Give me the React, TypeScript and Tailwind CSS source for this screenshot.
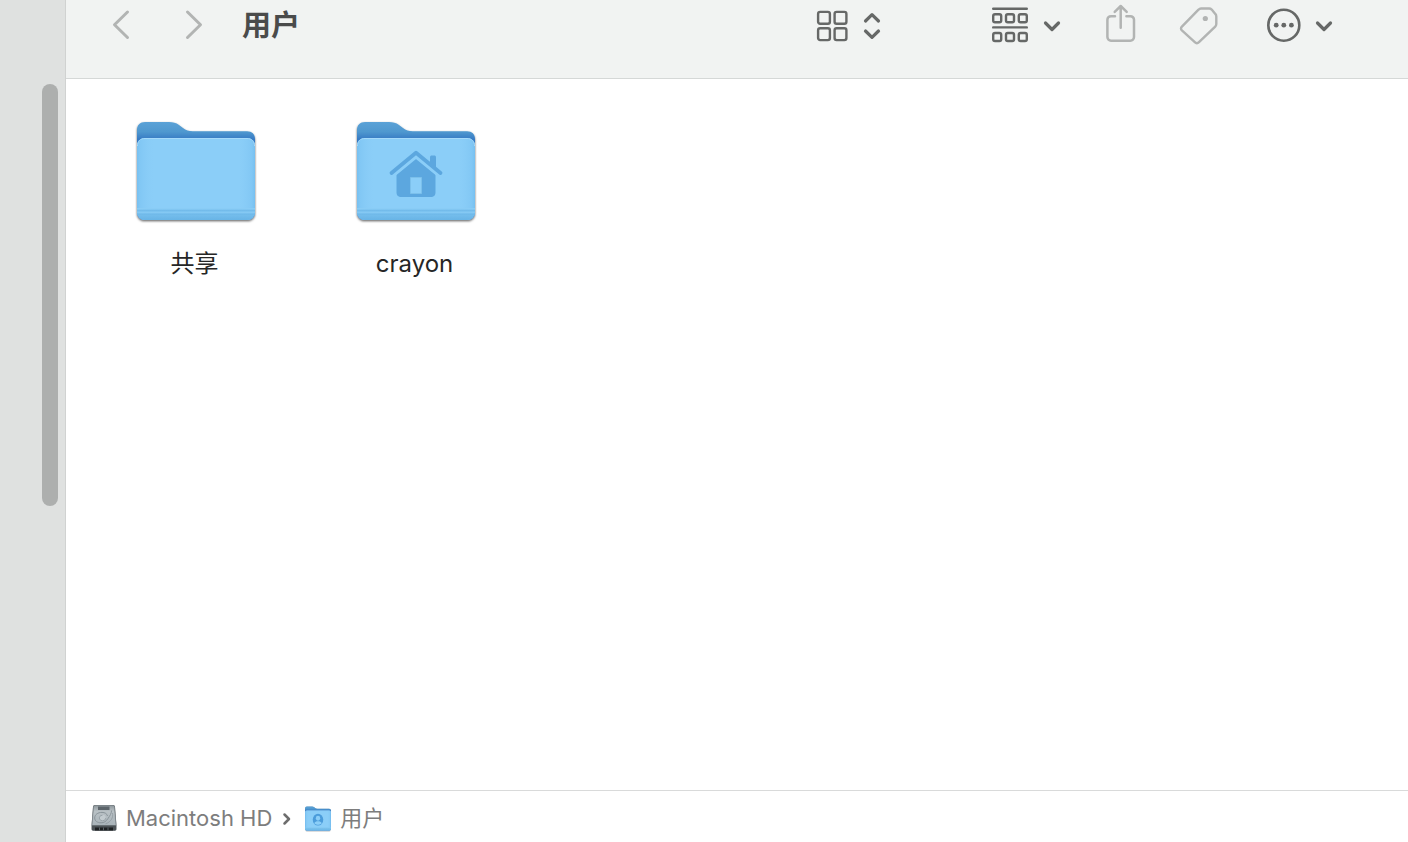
import { useId } from "react";
import type { ReactNode } from "react";

const ChevronDown = () => (
  <svg viewBox="0 0 18 50" className="h-[50px] w-[18px]" fill="none" aria-hidden="true">
    <path
      d="M2.500 23 9 29.500l6.500-6.500"
      stroke="currentColor"
      strokeWidth="3.2"
      strokeLinecap="round"
      strokeLinejoin="round"
    />
  </svg>
);

const GridIcon = () => (
  <svg viewBox="0 0 32 50" className="h-[50px] w-8" fill="none" aria-hidden="true">
    <g stroke="currentColor" strokeWidth="2.4">
      <rect x="2.1" y="11.9" width="11.8" height="11.8" rx="2" />
      <rect x="18.6" y="11.9" width="11.8" height="11.8" rx="2" />
      <rect x="2.1" y="28.3" width="11.8" height="11.8" rx="2" />
      <rect x="18.6" y="28.3" width="11.8" height="11.8" rx="2" />
    </g>
  </svg>
);

const UpDownIcon = () => (
  <svg viewBox="0 0 18 50" className="h-[50px] w-[18px]" fill="none" aria-hidden="true">
    <path
      d="M2.500 21 9 14.600l6.500 6.400M2.500 31 9 37.400l6.500-6.400"
      stroke="currentColor"
      strokeWidth="3.2"
      strokeLinecap="round"
      strokeLinejoin="round"
    />
  </svg>
);

const GroupIcon = () => (
  <svg viewBox="0 0 38 50" className="h-[50px] w-[38px]" fill="none" aria-hidden="true">
    <g stroke="currentColor" strokeWidth="2.4">
      <path d="M2.200 8.700h33.600M2.200 27.400h33.600" strokeLinecap="round" />
      {[2.2, 15, 27.8].map((x) => (
        <g key={x}>
          <rect x={x} y="14.3" width="8" height="8" rx="1.8" />
          <rect x={x} y="33" width="8" height="8" rx="1.8" />
        </g>
      ))}
    </g>
  </svg>
);

const ShareIcon = () => (
  <svg viewBox="0 0 32 50" className="h-[50px] w-8" fill="none" aria-hidden="true">
    <g stroke="currentColor" strokeWidth="2.5" strokeLinecap="round" strokeLinejoin="round">
      <path d="M10 16.200H6a3.600 3.600 0 0 0-3.600 3.600v17.300A3.600 3.600 0 0 0 6 40.700h19.400a3.600 3.600 0 0 0 3.600-3.600V19.800a3.600 3.600 0 0 0-3.600-3.600h-4" />
      <path d="M15.700 27.800V6.200M9.700 11.800l6-5.800 6 5.800" />
    </g>
  </svg>
);

const TagIcon = () => (
  <svg viewBox="0 0 40 50" className="h-[50px] w-10" fill="none" aria-hidden="true">
    <path
      d="M22 8.500h8.200c1 0 1.800.4 2.500 1.100l3.600 4.300c.7.700 1 1.600 1 2.500v7.600c0 1-.4 1.900-1.100 2.600L20 42.200c-1.400 1.400-2.800 1.400-4.200 0L2.900 30.400c-1.200-1.200-1.200-2.600 0-3.800L19.500 9.700c.7-.8 1.500-1.200 2.500-1.200Z"
      stroke="currentColor"
      strokeWidth="2.4"
      strokeLinejoin="round"
    />
    <circle cx="26.300" cy="18.500" r="2.600" fill="currentColor" />
  </svg>
);

const MoreIcon = () => (
  <svg viewBox="0 0 36 50" className="h-[50px] w-9" fill="none" aria-hidden="true">
    <circle cx="17.800" cy="25.200" r="15.500" stroke="currentColor" strokeWidth="2.600" />
    <g fill="currentColor">
      <circle cx="10.200" cy="25.200" r="2.400" />
      <circle cx="17.800" cy="25.200" r="2.400" />
      <circle cx="25.400" cy="25.200" r="2.400" />
    </g>
  </svg>
);

const FolderIcon = ({ className, children }: { className: string; children?: ReactNode }) => {
  const id = useId();

  return (
    <svg
      viewBox="0 0 128 110"
      preserveAspectRatio="none"
      className={className}
      fill="none"
      aria-hidden="true"
    >
      <defs>
        <linearGradient id={`${id}back`} x1="0" y1="0" x2="0" y2="1">
          <stop offset="0" stopColor="#5ba2d7" />
          <stop offset="0.1" stopColor="#4f98cf" />
          <stop offset="0.18" stopColor="#3579c3" />
          <stop offset="1" stopColor="#3579c3" />
        </linearGradient>
        <linearGradient id={`${id}edge`} x1="0" y1="0" x2="1" y2="0">
          <stop offset="0" stopColor="#4fa6e3" stopOpacity="0.35" />
          <stop offset="0.03" stopColor="#62b1e8" stopOpacity="0.22" />
          <stop offset="0.14" stopColor="#7dc4f2" stopOpacity="0" />
          <stop offset="0.86" stopColor="#7dc4f2" stopOpacity="0" />
          <stop offset="0.97" stopColor="#62b1e8" stopOpacity="0.22" />
          <stop offset="1" stopColor="#4fa6e3" stopOpacity="0.35" />
        </linearGradient>
        <linearGradient id={`${id}base`} x1="0" y1="0" x2="0" y2="1">
          <stop offset="0" stopColor="#84c9f4" />
          <stop offset="1" stopColor="#68b4e6" />
        </linearGradient>
        <clipPath id={`${id}front`}>
          <rect x="5" y="22" width="118" height="82" rx="8" />
        </clipPath>
        <filter id={`${id}shadow`} x="-5%" y="-5%" width="110%" height="112%">
          <feDropShadow dx="0" dy="1.2" stdDeviation="1" floodColor="#000000" floodOpacity="0.6" />
        </filter>
      </defs>
      <g filter={`url(#${id}shadow)`}>
        <path
          d="M5 14c0-5 3-8 8-8h24c4 0 7 .8 10 3l4 3c3 2.300 5.500 3.300 10 3.300H115c5 0 8 3 8 7.700v73c0 5-3 8-8 8H13c-5 0-8-3-8-8Z"
          fill={`url(#${id}back)`}
        />
        <rect x="5" y="22" width="118" height="82" rx="8" fill="#8bcef8" />
      </g>
      <g clipPath={`url(#${id}front)`}>
        <rect x="5" y="22" width="118" height="82" fill={`url(#${id}edge)`} />
        <path d="M5 92h118v12H5Z" fill={`url(#${id}base)`} />
        <path d="M5 94.500h118M5 98.500h118" stroke="#6fb8e8" strokeOpacity="0.7" />
        <path d="M5 92.500h118M5 96.500h118" stroke="#90d0f7" strokeOpacity="0.5" />
      </g>
      <path d="M5.500 30c0-4.800 2.700-7.500 7.500-7.500h102c4.800 0 7.500 2.700 7.500 7.500" stroke="#a5dafa" />
      {children}
    </svg>
  );
};

const HouseMark = () => (
  <g>
    <path
      d="M44.500 58.500 64 42l19.500 16.500V76c0 3.600-1.500 5-5 5h-29c-3.500 0-5-1.400-5-5Z"
      fill="#5ca7df"
    />
    <path d="M58.500 61.500h11v16h-11Z" fill="#8bcef8" stroke="#7cc0eb" />
    <path
      d="M39.500 58.500 64 38.500l24.500 20"
      stroke="#8bcef8"
      strokeWidth="7"
      strokeLinejoin="round"
    />
    <path d="M78 48V41.500c0-1.400.6-2 2-2h2c1.400 0 2 .6 2 2V54Z" fill="#5ca7df" />
    <path
      d="M39.500 57 64 36.800 88.500 57"
      stroke="#5ca7df"
      strokeWidth="3.8"
      strokeLinecap="round"
      strokeLinejoin="round"
    />
  </g>
);

const PersonMark = () => (
  <g>
    <circle cx="64" cy="60" r="24" fill="#4b9cdb" />
    <circle cx="64" cy="54" r="10" fill="#8bcef8" />
    <path d="M47 74c3-6 9-8 17-8s14 2 17 8c-8 8-26 8-34 0Z" fill="#8bcef8" />
  </g>
);

const DriveIcon = () => (
  <svg viewBox="0 0 28 30" className="h-[30px] w-7" fill="none" aria-hidden="true">
    <defs>
      <linearGradient id="drive-top" x1="0" y1="0" x2="0" y2="1">
        <stop offset="0" stopColor="#8f989d" />
        <stop offset="0.3" stopColor="#b9c1c5" />
        <stop offset="1" stopColor="#a9b3b9" />
      </linearGradient>
    </defs>
    <path
      d="M5 1h18c1.200 0 1.900.6 2 1.700L26.500 21.500V25c0 1-.7 1.700-1.700 1.700H3.200c-1 0-1.700-.7-1.700-1.700v-3.500L3 2.700C3.100 1.600 3.800 1 5 1Z"
      fill="#555c60"
    />
    <path
      d="M5.200 1.500h17.600c.9 0 1.500.4 1.600 1.400L26 21.500H2L3.600 2.900c.1-1 .7-1.400 1.600-1.400Z"
      fill="url(#drive-top)"
      stroke="#838b90"
      strokeWidth="0.6"
    />
    <path d="M8 2.500h11.500V6H8Z" fill="#5c646a" />
    <circle cx="12.500" cy="14" r="3.200" fill="#c3cbcf" />
    <path
      d="M21.500 6.500c0 3-1.500 5-3.500 8-2 3-4 4.300-7 4.300-3.700 0-6.300-1.800-6.300-4.800 0-3.300 3-5.600 7.300-5.600 3 0 5 1.400 5.500 3.600"
      stroke="#8a949a"
    />
    <path
      d="M22.500 9c1 4.500-1.500 9-7 10.800M15.700 14.200a3.200 2.800 0 1 1-3.200-3"
      stroke="#8f999f"
      strokeWidth="0.8"
    />
    <path d="M2 21.500h24v3.700c0 .6-.4 1-1 1H3c-.6 0-1-.4-1-1Z" fill="#4c5256" />
    <path d="M5 23.500h18v3H5Z" fill="#1d2022" />
    <path d="M9.500 23.500v3M13.500 23.500v3M18 23.500v3" stroke="#596065" />
  </svg>
);

const folders = [
  { name: "共享", home: false },
  { name: "crayon", home: true },
];

const App = () => {
  return (
    <div className="flex min-h-screen bg-white font-['Inter','Noto_Sans_CJK_SC',sans-serif]">
      <aside className="flex w-[66px] shrink-0 justify-end border-r border-[#d0d2d1] bg-[#dfe1e0] pt-[84px] pr-[7px]">
        <div className="h-[422px] w-4 rounded-full bg-[#adafae]" />
      </aside>

      <div className="flex min-w-0 flex-1 flex-col">
        <header className="flex h-[79px] items-start border-b border-[#d5d8d7] bg-[#f1f3f2] pr-[75px] pl-[45px] text-[#666867]">
          <nav aria-label="History" className="flex gap-[53px] text-[#b2b4b3]">
            <button type="button" aria-label="Back">
              <svg viewBox="0 0 20 50" className="h-[50px] w-5" fill="none" aria-hidden="true">
                <path
                  d="M16.500 12 3.500 24.800l13 12.700"
                  stroke="currentColor"
                  strokeWidth="3"
                  strokeLinecap="round"
                  strokeLinejoin="round"
                />
              </svg>
            </button>
            <button type="button" aria-label="Forward">
              <svg viewBox="0 0 20 50" className="h-[50px] w-5" fill="none" aria-hidden="true">
                <path
                  d="M3.500 12l13 12.800-13 12.700"
                  stroke="currentColor"
                  strokeWidth="3"
                  strokeLinecap="round"
                  strokeLinejoin="round"
                />
              </svg>
            </button>
          </nav>
          <h1 className="ml-[38px] flex-1 text-[29px] leading-[52px] font-bold text-[#4a4b4b]">
            用户
          </h1>
          <div className="flex items-start">
            <button type="button" aria-label="View as icons" className="mr-[110px] flex gap-[15px]">
              <GridIcon />
              <UpDownIcon />
            </button>
            <button type="button" aria-label="Group items" className="mr-11 flex gap-[14px]">
              <GroupIcon />
              <ChevronDown />
            </button>
            <button type="button" aria-label="Share" disabled className="mr-[42px] text-[#b2b4b3]">
              <ShareIcon />
            </button>
            <button type="button" aria-label="Edit tags" disabled className="mr-[47px] text-[#b2b4b3]">
              <TagIcon />
            </button>
            <button type="button" aria-label="More actions" className="flex gap-[13px]">
              <MoreIcon />
              <ChevronDown />
            </button>
          </div>
        </header>

        <main className="flex flex-1 flex-wrap content-start pt-[37px] pl-5">
          {folders.map((folder) => (
            <button
              key={folder.name}
              type="button"
              className="flex w-[220px] flex-col items-center gap-5 text-2xl text-[#262626]"
            >
              <FolderIcon className="h-[110px] w-32">
                {folder.home && <HouseMark />}
              </FolderIcon>
              <span className="pr-[3px] leading-9">{folder.name}</span>
            </button>
          ))}
        </main>

        <footer className="flex h-[52px] items-center border-t border-[#d9dada] pt-1 pl-6 text-[22px] text-[#7d7d7d]">
          <DriveIcon />
          <span className="ml-2">Macintosh HD</span>
          <svg viewBox="0 0 12 14" className="ml-2 h-[14px] w-3" fill="none" aria-hidden="true">
            <path
              d="M4.500 2.500 9 7l-4.500 4.500"
              stroke="#6d6d6d"
              strokeWidth="2.5"
              strokeLinecap="round"
              strokeLinejoin="round"
            />
          </svg>
          <FolderIcon className="ml-3 h-[27px] w-7">
            <PersonMark />
          </FolderIcon>
          <span className="ml-2">用户</span>
        </footer>
      </div>
    </div>
  );
};

export default App;
